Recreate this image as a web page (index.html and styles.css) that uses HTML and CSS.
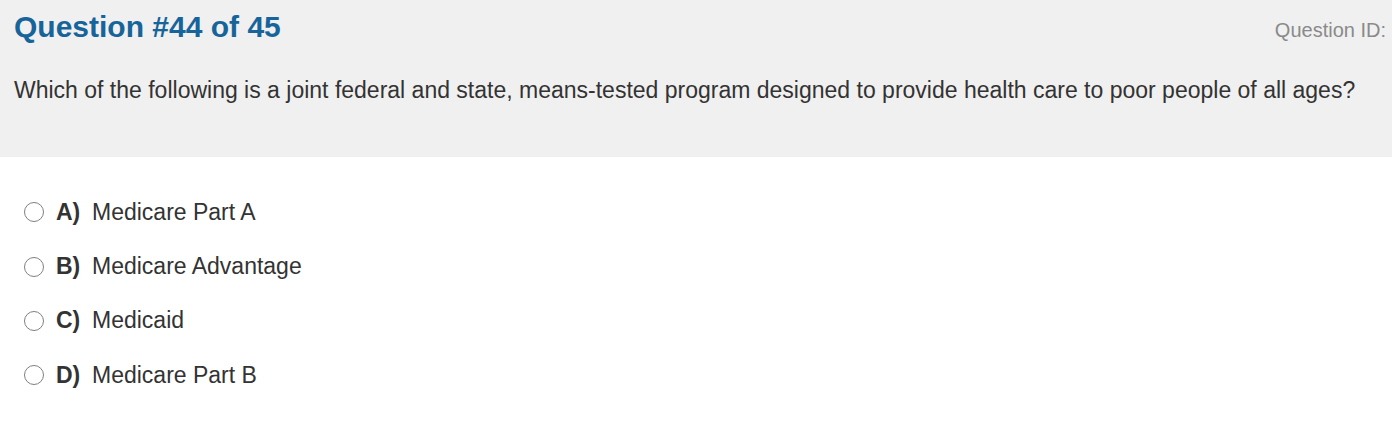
FILE: index.html
```html
<!DOCTYPE html>
<html>
<head>
<meta charset="utf-8">
<link rel="stylesheet" href="styles.css">
</head>
<body>
<div class="header">
  <div class="top">
    <h1 class="title">Question #44 of 45</h1>
    <span class="qid">Question ID:</span>
  </div>
  <p class="stem">Which of the following is a joint federal and state, means-tested program designed to provide health care to poor people of all ages?</p>
</div>
<ul class="options">
  <li class="opt"><span class="radio"></span><span class="letter">A)</span><span class="text">Medicare Part A</span></li>
  <li class="opt"><span class="radio"></span><span class="letter">B)</span><span class="text">Medicare Advantage</span></li>
  <li class="opt"><span class="radio"></span><span class="letter">C)</span><span class="text">Medicaid</span></li>
  <li class="opt"><span class="radio"></span><span class="letter">D)</span><span class="text">Medicare Part B</span></li>
</ul>
</body>
</html>
```
FILE: styles.css
```css
html, body {
  margin: 0;
  padding: 0;
  background: #ffffff;
  font-family: "Liberation Sans", Arial, sans-serif;
}
.header {
  background: #f0f0f0;
  height: 157px;
  padding: 0 6px 0 14px;
  box-sizing: border-box;
}
.top {
  display: flex;
  justify-content: space-between;
  align-items: baseline;
  padding-top: 8px;
}
.title {
  margin: 0;
  font-size: 30px;
  font-weight: bold;
  color: #17649a;
  line-height: 38px;
}
.qid {
  font-size: 20px;
  color: #8a8a8a;
}
.stem {
  margin: 0;
  margin-top: 31px;
  font-size: 23px;
  line-height: 26px;
  color: #333333;
}
.options {
  list-style: none;
  margin: 0;
  padding: 28px 0 0 24px;
}
.opt {
  display: flex;
  align-items: center;
  height: 54.4px;
  font-size: 23px;
  color: #333333;
}
.radio {
  width: 20px;
  height: 20px;
  border: 1.5px solid #808080;
  border-radius: 50%;
  box-sizing: border-box;
  margin-right: 12px;
  background: #fff;
}
.letter {
  font-weight: bold;
  width: 36px;
}
```
